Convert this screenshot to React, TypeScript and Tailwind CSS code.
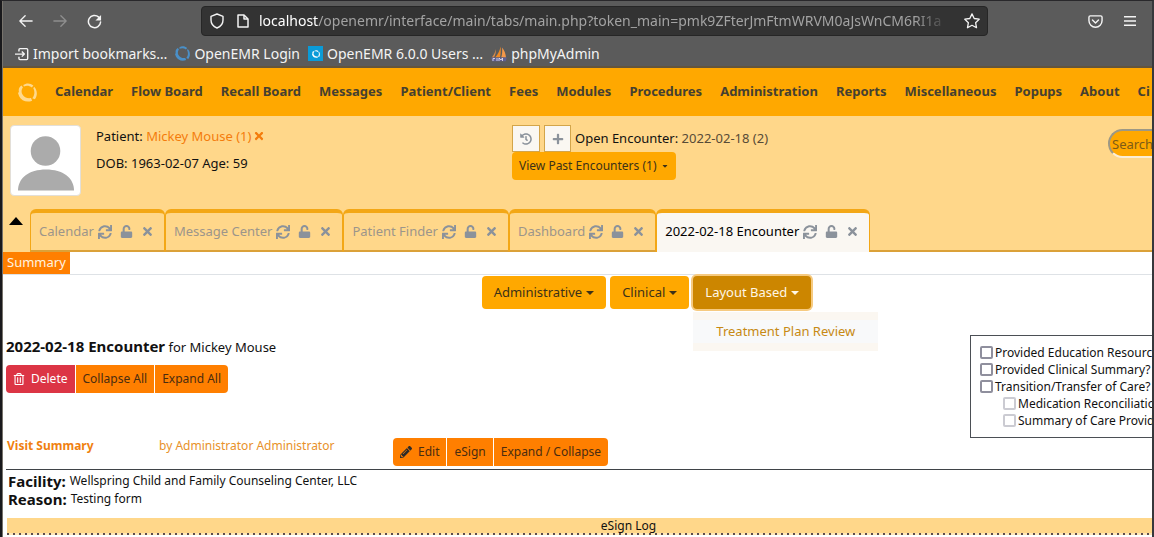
import type { ReactNode } from "react";
import {
  FaCaretDown,
  FaHistory,
  FaPencilAlt,
  FaPlus,
  FaRegTrashAlt,
  FaSync,
  FaTimes,
  FaUnlock,
} from "react-icons/fa";

const menuItems = [
  "Calendar",
  "Flow Board",
  "Recall Board",
  "Messages",
  "Patient/Client",
  "Fees",
  "Modules",
  "Procedures",
  "Administration",
  "Reports",
  "Miscellaneous",
  "Popups",
  "About",
  "Ci",
];

const tabs = [
  { label: "Calendar", active: false },
  { label: "Message Center", active: false },
  { label: "Patient Finder", active: false },
  { label: "Dashboard", active: false },
  { label: "2022-02-18 Encounter", active: true },
];

const checks = [
  { id: "education", label: "Provided Education Resource(s)?", nested: false },
  { id: "clinical", label: "Provided Clinical Summary?", nested: false },
  { id: "transition", label: "Transition/Transfer of Care?", nested: false },
  { id: "reconciliation", label: "Medication Reconciliation Performed?", nested: true },
  { id: "care", label: "Summary of Care Provided?", nested: true },
];

function Swirl({ className }: { className: string }) {
  return (
    <svg viewBox="0 0 20 20" className={className} fill="currentColor" aria-hidden="true">
      <path d="M5.500 2.200C8.500-.3 13 -.2 16.200 2.600L14.600 4.800C12 2.700 9 2.300 6.300 3.700Z" />
      <path d="M17 4C20.800 8 20.500 13.500 17.800 17.200L15 16C17.600 13 17.900 8.700 16.100 5.600Z" />
      <path d="M3.800 2.700L5.200 4.800C3.600 6.800 3.300 9.700 4.600 11.900C6.300 14.900 9.500 16.500 13.700 15.900L14.900 18.600C9.300 21 3.600 18.600 1.200 13.900L0 10.500L1 9.500C.2 6.500 1.500 4 3.800 2.700Z" />
    </svg>
  );
}

function BrowserToolbar() {
  return (
    <header className="border-b-2 border-[#64553c] bg-[#5b5b5b] text-[#f4f4f4]">
      <div className="flex h-10 items-center">
        <div className="flex w-[198px] shrink-0 items-center gap-5 pl-4">
          <button aria-label="Back">
            <svg viewBox="0 0 16 16" className="size-[14px]" fill="none" stroke="currentColor" strokeWidth="1.5" strokeLinecap="round" strokeLinejoin="round">
              <path d="M15 8H1.500M7 2L1 8l6 6" />
            </svg>
          </button>
          <button aria-label="Forward" disabled className="text-[#8f8f8f]">
            <svg viewBox="0 0 16 16" className="size-[14px]" fill="none" stroke="currentColor" strokeWidth="1.500" strokeLinecap="round" strokeLinejoin="round">
              <path d="M1 8h13.500M9 2l6 6-6 6" />
            </svg>
          </button>
          <button aria-label="Reload">
            <svg viewBox="0 0 16 16" className="size-[15px]" fill="none" stroke="currentColor" strokeWidth="1.600" strokeLinecap="round">
              <path d="M12.500 3.300A6.500 6.500 0 1 0 14.500 8.500" />
              <path d="M15 1v6H9z" fill="currentColor" stroke="none" />
            </svg>
          </button>
        </div>
        <div className="flex h-[30px] min-w-0 flex-1 items-center rounded border border-[#262626] bg-[#333333] px-[7px]">
          <svg viewBox="0 0 16 16" className="size-4 shrink-0" fill="none" stroke="currentColor" strokeWidth="1.400" strokeLinejoin="round" aria-hidden="true">
            <path d="M8 1l6 2.300v3.700c0 3.800-2.300 6.600-6 8-3.700-1.400-6-4.200-6-8V3.300z" />
          </svg>
          <svg viewBox="0 0 16 16" className="ml-[10px] size-4 shrink-0" fill="none" stroke="currentColor" strokeWidth="1.500" strokeLinejoin="round" aria-hidden="true">
            <path d="M3 2H9L13 6v8H3z" />
            <path d="M9 2v4h4" />
          </svg>
          <div className="ml-2 min-w-0 flex-1 overflow-hidden text-sm whitespace-nowrap text-[#a3a3a3] [mask-image:linear-gradient(to_right,black_94%,transparent_99%)]">
            <span className="text-white">localhost</span>
            /openemr/interface/main/tabs/main.php?token_main=pmk9ZFterJmFtmWRVM0aJsWnCM6RI1a
          </div>
          <button aria-label="Bookmark this page" className="ml-2">
            <svg viewBox="0 0 16 16" className="size-4" fill="none" stroke="currentColor" strokeWidth="1.300" strokeLinejoin="round">
              <path d="M8 .9l2.200 4.600 5 .7-3.600 3.500.9 5L8 12.300l-4.500 2.400.9-5L.8 6.200l5-.7z" />
            </svg>
          </button>
        </div>
        <div className="flex w-[164px] shrink-0 items-center justify-end gap-[21px] pr-4">
          <button aria-label="Save to Pocket">
            <svg viewBox="0 0 16 16" className="size-[15px]" fill="none" stroke="currentColor" strokeWidth="1.500" strokeLinecap="round" strokeLinejoin="round">
              <path d="M2.500 2h11c.8 0 1.500.6 1.500 1.500V7c0 4-3 7.200-7 7.200S1 11 1 7V3.500C1 2.600 1.700 2 2.500 2z" />
              <path d="M4.800 6.300L8 9.500l3.200-3.200" />
            </svg>
          </button>
          <button aria-label="Menu">
            <svg viewBox="0 0 14 14" className="size-3" fill="none" stroke="currentColor" strokeWidth="1.600">
              <path d="M0 2h14M0 7h14M0 12h14" />
            </svg>
          </button>
        </div>
      </div>
      <nav aria-label="Bookmarks" className="flex h-[25px] items-center gap-2 pl-3 text-sm leading-5 whitespace-nowrap">
        <a href="#import" className="flex items-center gap-1">
          <svg viewBox="0 0 16 16" className="size-[14px]" fill="none" stroke="currentColor" strokeWidth="1.600" strokeLinejoin="round" aria-hidden="true">
            <path d="M4.500 5V3q0-1.200 1.200-1.200h7.600q1.200 0 1.200 1.200v10.200q0 1.200-1.200 1.200H5.700q-1.200 0-1.200-1.200V11.200" />
            <path d="M0 8.100h10.500M7.800 5.200l2.900 2.900-2.900 2.900" />
          </svg>
          Import bookmarks…
        </a>
        <a href="#login" className="flex items-center gap-1">
          <Swirl className="size-[15px] text-[#4a90c8]" />
          OpenEMR Login
        </a>
        <a href="#users" className="flex items-center gap-1">
          <span className="flex size-[15px] items-center justify-center bg-[#0a9bd8]">
            <Swirl className="size-2 text-white" />
          </span>
          OpenEMR 6.0.0 Users …
        </a>
        <a href="#phpmyadmin" className="flex items-center gap-1">
          <svg viewBox="0 0 16 16" className="size-4" aria-hidden="true">
            <path d="M5 3C5 6 4.500 9 3 11.500H.8C2.800 9 4.300 6 5 3z" fill="#d98a4a" />
            <path d="M9.500 .5C10 4 9.800 8 9 11.500H4C6.800 8.500 8.800 5 9.500 .5z" fill="#f08a24" />
            <path d="M11 1.500c2.500 3 3.800 6.500 4 10H10.200c1-3 1.300-6.500.8-10z" fill="#f4984a" />
            <path d="M0 11.500h15.800l-1 3.700H1z" fill="#5f5f94" />
            <path d="M2 15v-2.500h2M6 15v-3M8 15v-3l2 2 1.500-2v3" fill="none" stroke="#e8e8f4" strokeWidth=".8" />
          </svg>
          phpMyAdmin
        </a>
      </nav>
    </header>
  );
}

function MainMenu() {
  return (
    <nav aria-label="Main" className="flex h-12 items-center gap-[18px] overflow-hidden bg-[#ffa800] pl-[15px] text-[13px] font-bold whitespace-nowrap text-[#454031]">
      <a href="#home" aria-label="OpenEMR" className="shrink-0">
        <Swirl className="size-[19px] text-[#ffd98c]" />
      </a>
      {menuItems.map((item) => (
        <a key={item} href="#menu">
          {item}
        </a>
      ))}
    </nav>
  );
}

function PatientBar() {
  return (
    <section className="flex h-[93px] items-start overflow-hidden pt-[9px]">
      <div className="ml-[7px] flex size-[71px] shrink-0 items-end justify-center rounded border border-[#e3dfd8] bg-white pb-1">
        <svg viewBox="0 0 56 55" className="w-14" fill="#ababab" role="img" aria-label="Patient photo">
          <circle cx="27.500" cy="15" r="14.800" />
          <path d="M0 54.500C0 42 11 33.500 28 33.500s28 8.500 28 21z" />
        </svg>
      </div>
      <div className="ml-[15px] w-[416px] shrink-0 text-[13px] leading-[22px] text-[#111111]">
        <p>
          Patient:{" "}
          <a href="#patient" className="text-[#f47c0c]">
            Mickey Mouse (1)
          </a>
          <button aria-label="Clear patient" className="ml-0.5 align-[-1px] text-[#f47c0c]">
            <FaTimes className="size-3" />
          </button>
        </p>
        <p className="mt-[5px]">DOB: 1963-02-07 Age: 59</p>
      </div>
      <div className="shrink-0">
        <div className="flex items-center gap-1">
          <button aria-label="Encounter history" className="flex h-[27px] w-7 items-center justify-center border border-[#d3a54a] bg-[#faf7f2] text-[#8b929b]">
            <FaHistory className="size-3" />
          </button>
          <button aria-label="New encounter" className="flex h-[27px] w-[27px] items-center justify-center border border-[#d3a54a] bg-[#faf7f2] text-[#8b929b]">
            <FaPlus className="size-3" />
          </button>
          <p className="text-[13px] text-[#111111]">
            Open Encounter: <span className="text-[#574b37]">2022-02-18 (2)</span>
          </p>
        </div>
        <button className="flex h-7 items-center gap-1 rounded bg-[#ffa800] px-[7px] text-xs text-[#3c3118]">
          View Past Encounters (1)
          <FaCaretDown className="size-2" />
        </button>
      </div>
      <div className="mt-1 ml-auto w-11 shrink-0 overflow-hidden">
        <input
          type="search"
          aria-label="Search patients"
          placeholder="Search by any demographics"
          className="h-[29px] w-60 rounded-full border-2 border-t-[#9d9885] border-r-[#e8e3d8] border-b-[#fbeed6] border-l-[#9d9885] bg-[#ffa800] pl-0.5 text-[13px] text-[#7d5b17] placeholder:text-[#7d5b17]"
        />
      </div>
    </section>
  );
}

function TabBar() {
  return (
    <div className="flex h-[43px]">
      <button aria-label="Collapse patient bar" className="flex w-[27px] shrink-0 items-start pt-2 pl-1.5">
        <svg viewBox="0 0 14 8" className="w-[14px]" fill="black">
          <path d="M7 0l7 8H0z" />
        </svg>
      </button>
      {tabs.map((tab) => (
        <div
          key={tab.label}
          className={
            tab.active
              ? "flex items-center rounded-t-md border-x border-t-4 border-[#f3a716] bg-[#faf7f2] px-2 pb-0.5 text-[13px] whitespace-nowrap text-black"
              : "flex items-center rounded-t-md border-x border-t-4 border-b-2 border-[#f3a716] border-b-[#dba139] px-2 text-[13px] whitespace-nowrap text-[#9c958a]"
          }
        >
          <button>{tab.label}</button>
          <div className="ml-1 flex items-center gap-2 pr-0.5 text-[#8b929b]">
            <button aria-label={`Refresh ${tab.label}`}>
              <FaSync className="size-[14px]" />
            </button>
            <button aria-label={`Lock ${tab.label}`}>
              <FaUnlock className="size-[13px]" />
            </button>
            <button aria-label={`Close ${tab.label}`}>
              <FaTimes className="size-[13px]" />
            </button>
          </div>
        </div>
      ))}
      <div className="flex-1 border-b-2 border-[#dba139]" />
    </div>
  );
}

function MenuButton({ children, open = false }: { children: ReactNode; open?: boolean }) {
  return (
    <button
      aria-expanded={open}
      className={
        open
          ? "flex h-[33px] items-center gap-1 rounded bg-[#cc8600] px-3 text-[13px] whitespace-nowrap text-[#fff7e6] ring-2 ring-[#f6ca80]"
          : "flex h-[33px] items-center gap-1 rounded bg-[#ffa800] px-3 text-[13px] whitespace-nowrap text-[#3c3118]"
      }
    >
      {children}
      <svg viewBox="0 0 8 4" className="w-2" fill="currentColor" aria-hidden="true">
        <path d="M0 0h8L4 4z" />
      </svg>
    </button>
  );
}

function ActionButton({ children, danger = false }: { children: ReactNode; danger?: boolean }) {
  return (
    <button
      className={
        danger
          ? "flex h-7 items-center gap-1.5 bg-[#dc3545] px-[7px] text-xs whitespace-nowrap text-white"
          : "flex h-7 items-center gap-1.5 bg-[#ff7f00] px-[7px] text-xs whitespace-nowrap text-[#4a2c10]"
      }
    >
      {children}
    </button>
  );
}

function CareChecklist() {
  return (
    <fieldset className="h-[103px] w-[182px] min-w-0 shrink-0 overflow-hidden border border-r-0 border-[#4b4f55] pt-2 pl-[9px] text-xs leading-[17px] whitespace-nowrap text-[#111111]">
      {checks.map((check) => (
        <div key={check.id} className={check.nested ? "flex items-center gap-0.5 pl-[23px]" : "flex items-center gap-0.5"}>
          <input
            id={check.id}
            type="checkbox"
            disabled={check.nested}
            className="size-[13px] shrink-0 appearance-none rounded-xs border-2 border-[#8f8f9d] bg-white disabled:border-[#cbcbd2]"
          />
          <label htmlFor={check.id}>{check.label}</label>
        </div>
      ))}
    </fieldset>
  );
}

function Encounter() {
  return (
    <main className="flex flex-1 flex-col bg-white text-[#111111]">
      <div className="flex h-[23px] shrink-0 border-b border-[#dee2e6]">
        <button className="bg-[#ff7f00] px-1 text-[13px] text-[#fff3e0]">Summary</button>
      </div>
      <div className="flex justify-center gap-1 pt-px pl-[138px]">
        <MenuButton>Administrative</MenuButton>
        <MenuButton>Clinical</MenuButton>
        <div className="relative">
          <MenuButton open>Layout Based</MenuButton>
          <div className="absolute top-full left-0 mt-[3px] bg-[#fbf7f1] py-2">
            <a href="#treatment" className="block bg-[#f8f9fa] px-[23px] text-[13px] leading-[23px] whitespace-nowrap text-[#c78a14]">
              Treatment Plan Review
            </a>
          </div>
        </div>
      </div>
      <div className="flex items-start pt-[26px] pl-[3px]">
        <div className="min-w-0 flex-1">
          <h1 className="text-[13px] leading-[22px]">
            <strong className="text-[15px]">2022-02-18 Encounter</strong> for Mickey Mouse
          </h1>
          <div className="mt-[7px] flex w-fit gap-px overflow-hidden rounded">
            <ActionButton danger>
              <FaRegTrashAlt className="size-3" />
              Delete
            </ActionButton>
            <ActionButton>Collapse All</ActionButton>
            <ActionButton>Expand All</ActionButton>
          </div>
        </div>
        <CareChecklist />
      </div>
      <div className="ml-[3px] flex h-8 items-start border-b border-[#3f4347] text-xs">
        <h2 className="w-[153px] pl-px font-bold text-[#f08010]">Visit Summary</h2>
        <p className="w-[234px] text-[#e8912a]">by Administrator Administrator</p>
        <div className="flex gap-px overflow-hidden rounded">
          <ActionButton>
            <FaPencilAlt className="size-3 text-[#2b2b2b]" />
            Edit
          </ActionButton>
          <ActionButton>eSign</ActionButton>
          <ActionButton>Expand / Collapse</ActionButton>
        </div>
      </div>
      <dl className="pt-0.5 pl-[5px] text-xs">
        <div className="flex h-[18px] items-center gap-1">
          <dt className="text-[15px] font-bold">Facility:</dt>
          <dd>Wellspring Child and Family Counseling Center, LLC</dd>
        </div>
        <div className="flex h-[18px] items-center gap-1">
          <dt className="text-[15px] font-bold">Reason:</dt>
          <dd>Testing form</dd>
        </div>
      </dl>
      <div className="mt-[10px] ml-1">
        <h2 className="bg-[#ffd78a] pl-[98px] text-center text-xs leading-[15px]">eSign Log</h2>
        <div className="h-0.5 bg-[#ffe8b8] bg-[repeating-linear-gradient(to_right,#5c4c4c_0_2px,transparent_2px_6px)]" />
      </div>
    </main>
  );
}

export default function App() {
  return (
    <div className="flex min-h-screen flex-col border-t border-r-2 border-l-2 border-t-[#29282b] border-r-[#37383c] border-l-[#19191c] bg-[#ffd78a] font-['Noto_Sans','Open_Sans',sans-serif]">
      <div className="flex flex-1 flex-col overflow-hidden border-l border-[#77736c]">
        <BrowserToolbar />
        <MainMenu />
        <PatientBar />
        <TabBar />
        <Encounter />
      </div>
    </div>
  );
}
